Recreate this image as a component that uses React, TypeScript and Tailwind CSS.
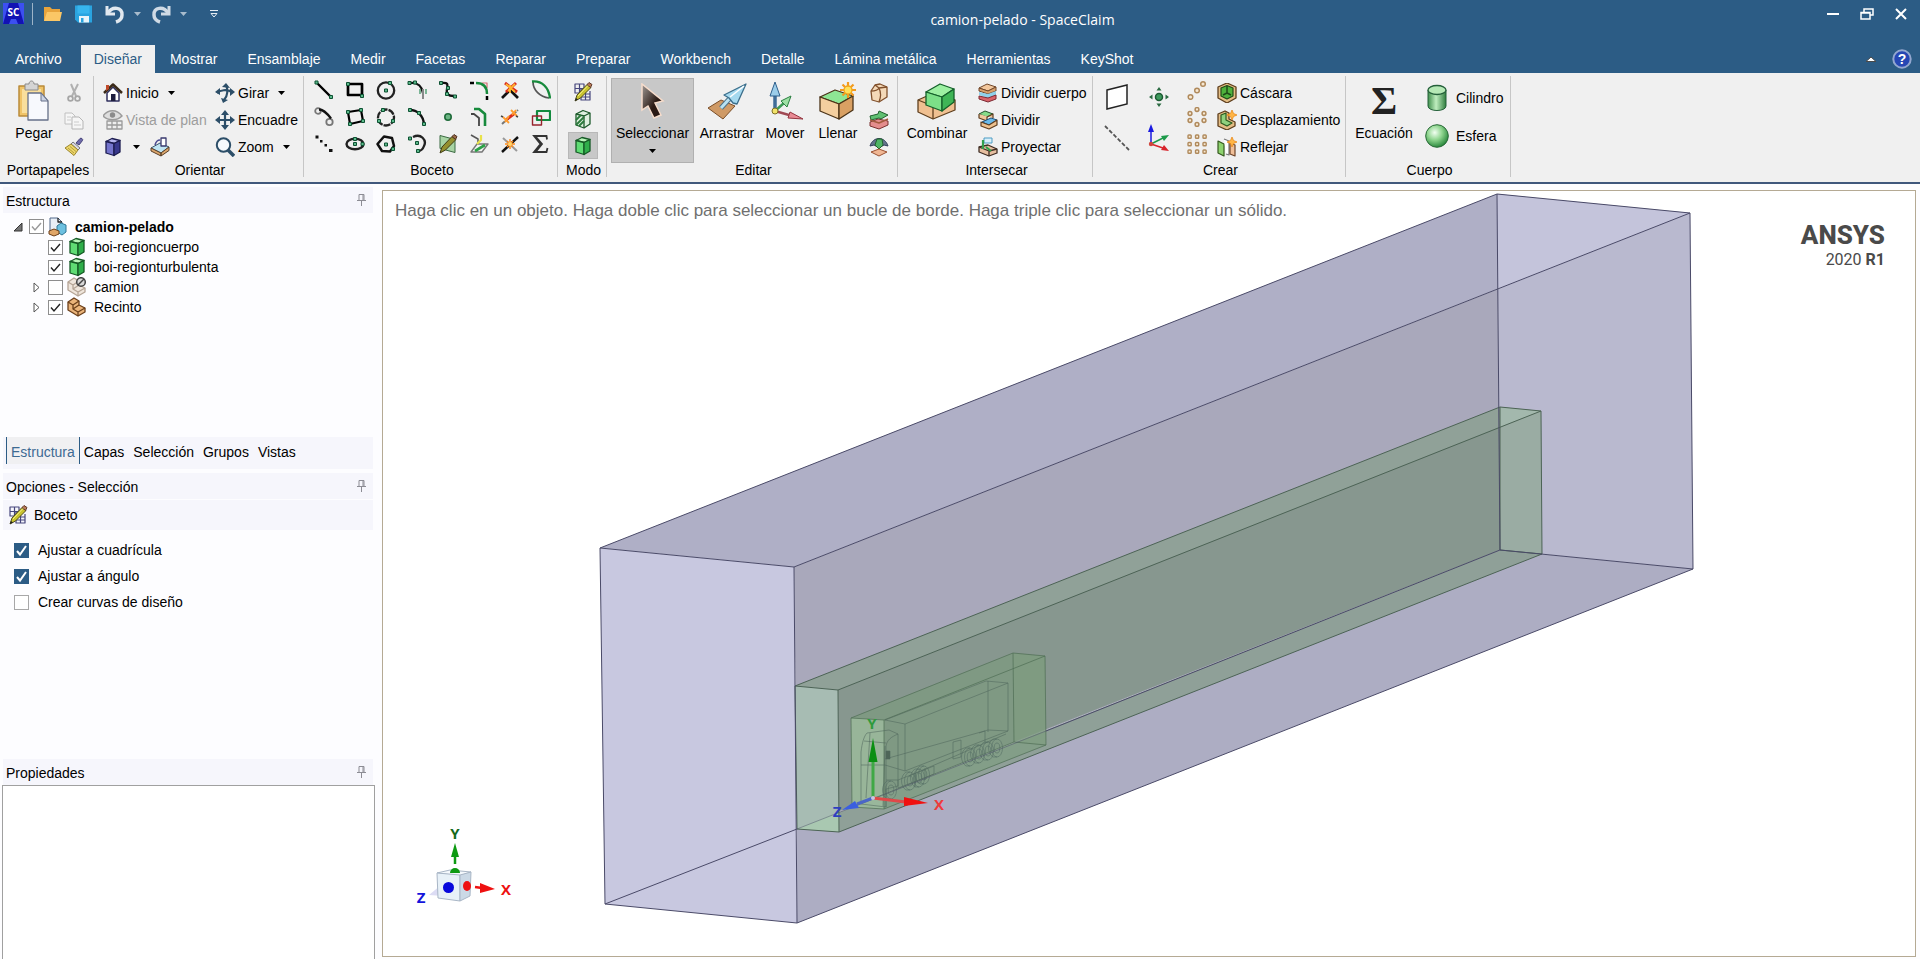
import React from "react";

type Kids = { children?: React.ReactNode };

/* ---------- icon helpers ---------- */

const Ico = ({ size = 20, children }: Kids & { size?: number }) => (
  <svg
    width={size}
    height={size}
    viewBox="0 0 20 20"
    fill="none"
    strokeLinejoin="round"
    className="shrink-0"
    aria-hidden="true"
  >
    {children}
  </svg>
);

const Node = ({ x, y }: { x: number; y: number }) => (
  <rect x={x - 1.5} y={y - 1.5} width="3" height="3" fill="#5cb88a" stroke="#0d5232" />
);

const Caret = ({ light = false }: { light?: boolean }) => (
  <svg width="7" height="4" viewBox="0 0 7 4" aria-hidden="true" className="shrink-0">
    <path d="M0 0h7L3.500 4z" fill={light ? "#a9bccd" : "#000"} />
  </svg>
);

const PencilGrid = () => (
  <Ico>
    <path d="M2 2h9v5H8v4H2zM2 6.500h8M6.500 2v9M12 12h5v6H8v-3h9M12.500 18v-8M17 9v9" stroke="#46467c" strokeWidth="1.200" />
    <path d="M2 19l2-6L14 2.500l4 3L7.500 16z" fill="#c9c32f" stroke="#4d4a18" />
    <path d="M14 2.500l2-2 3 2-1.500 3z" fill="#b87a5a" stroke="#5f3828" />
    <path d="M5 14l10-10.500" stroke="#f4f08a" />
    <path d="M2 19l1-3 2 1.500z" fill="#222" />
  </Ico>
);

const Cube = ({ top, left, right, line }: { top: string; left: string; right: string; line: string }) => (
  <g stroke={line} strokeWidth="1.300">
    <path d="M3 4.500L9 1.500l8 2-6 3z" fill={top} />
    <path d="M3 4.500l8 2V18.500l-8-2.500z" fill={left} />
    <path d="M11 6.500l6-3v11.500l-6 3.500z" fill={right} />
  </g>
);

const GreenCube = () => (
  <Ico>
    <Cube top="#b9f5b9" left="#5fdc73" right="#2fae4a" line="#155a25" />
  </Ico>
);

/* ---------- sketch tools ---------- */

const sketchTools: { name: string; art: React.ReactNode }[] = [
  {
    name: "Línea",
    art: (
      <>
        <path d="M3 3l14 14" stroke="#000" strokeWidth="2.400" />
        <Node x={2.5} y={2.5} />
        <Node x={17} y={17} />
      </>
    ),
  },
  {
    name: "Rectángulo",
    art: (
      <>
        <path d="M3 4h14v11H3z" stroke="#000" strokeWidth="2.700" />
        <Node x={3} y={4} />
        <Node x={17} y={16} />
      </>
    ),
  },
  {
    name: "Círculo",
    art: (
      <>
        <circle cx="10" cy="10.500" r="8.200" stroke="#222" strokeWidth="2.300" />
        <Node x={10} y={10.5} />
        <Node x={14} y={3} />
      </>
    ),
  },
  {
    name: "Arco tangente",
    art: (
      <>
        <path d="M3 3C11 2 15 7 16 13" stroke="#111" strokeWidth="2.300" />
        <path d="M16 9v10" stroke="#888" strokeWidth="2" />
        <path d="M13 9v5M19 9v5" stroke="#2f8f5b" strokeWidth="1.200" />
        <Node x={2.5} y={3} />
        <Node x={8} y={2.5} />
      </>
    ),
  },
  {
    name: "Spline",
    art: (
      <>
        <path d="M3 3c7-1 7 1 6 6s1 7 7 7" stroke="#111" strokeWidth="2.300" />
        <Node x={3} y={3} />
        <Node x={10} y={8} />
        <Node x={17} y={16.5} />
        <Node x={9} y={14} />
      </>
    ),
  },
  {
    name: "Esquina redondeada",
    art: (
      <>
        <path d="M13 3h5v5" stroke="#d96a72" strokeWidth="1.200" />
        <path d="M1 3h4M18 16v4" stroke="#000" strokeWidth="2.500" />
        <path d="M7 3c7 0 11 4 11 11" stroke="#178a3c" strokeWidth="2.400" />
      </>
    ),
  },
  {
    name: "Recortar",
    art: (
      <>
        <path d="M2 18L10 10l8 8" stroke="#111" strokeWidth="2.700" />
        <path d="M5 3l12 9M16 3L6 12" stroke="#d92b1c" strokeWidth="3" />
        <path d="M6 4l9 8M15 4l-7 7M10 5v8" stroke="#ffb52e" strokeWidth="1.800" />
      </>
    ),
  },
  {
    name: "Curva bisectriz",
    art: (
      <>
        <path d="M2 2c0 8 7 15 16 16" stroke="#555" strokeWidth="1.700" />
        <path d="M1 1.500c10-1 17 6 18 17" stroke="#178a3c" strokeWidth="2.400" />
      </>
    ),
  },
  {
    name: "Línea tangente",
    art: (
      <>
        <circle cx="4" cy="4" r="2.800" stroke="#777" strokeWidth="1.800" />
        <circle cx="15.500" cy="15" r="3.200" stroke="#777" strokeWidth="1.800" />
        <path d="M5 2.500c5 0 9 5 12 9" stroke="#111" strokeWidth="2.300" />
      </>
    ),
  },
  {
    name: "Rectángulo de tres puntos",
    art: (
      <>
        <path d="M3 5l13-2 2 11-13 3z" stroke="#000" strokeWidth="2.200" />
        <Node x={3} y={5} />
        <Node x={16} y={3} />
        <Node x={18} y={14} />
        <Node x={5} y={17} />
      </>
    ),
  },
  {
    name: "Círculo de tres puntos",
    art: (
      <>
        <circle cx="10" cy="10.500" r="8" stroke="#222" strokeWidth="2.300" strokeDasharray="7 1" />
        <Node x={7} y={3} />
        <Node x={3} y={14} />
        <Node x={17} y={14} />
      </>
    ),
  },
  {
    name: "Arco de tres puntos",
    art: (
      <>
        <path d="M3 3c7 0 13 5 14 14" stroke="#111" strokeWidth="2.300" />
        <Node x={3} y={3} />
        <Node x={12} y={6} />
        <Node x={17} y={17} />
      </>
    ),
  },
  {
    name: "Punto",
    art: <circle cx="10" cy="10" r="3.200" fill="#6cb583" stroke="#1f6b3a" strokeWidth="1.600" />,
  },
  {
    name: "Curva desplazada",
    art: (
      <>
        <path d="M2 7h3l5 4v8" stroke="#444" strokeWidth="1.800" />
        <path d="M5 2h5l6 5v12" stroke="#178a3c" strokeWidth="2.600" />
      </>
    ),
  },
  {
    name: "Dividir curva",
    art: (
      <>
        <path d="M2 17L18 3" stroke="#777" strokeWidth="2" strokeDasharray="4 1" />
        <path d="M6 13l9-7" stroke="#d92b1c" strokeWidth="3" />
        <path d="M3 10l6 6M5 15l4-6M11 3l6 6M12 8l4-5" stroke="#ff9d2e" strokeWidth="1.800" />
        <path d="M1 9l2 1M16 9l2 1" stroke="#444" strokeWidth="1.600" />
      </>
    ),
  },
  {
    name: "Escalar curva",
    art: (
      <>
        <path d="M6 4h13v9H6z" stroke="#138a3f" strokeWidth="2.200" />
        <path d="M1.500 9h9v9h-9z" stroke="#96232c" strokeWidth="1.400" />
      </>
    ),
  },
  {
    name: "Línea de construcción",
    art: (
      <g fill="#111">
        <rect x="1.500" y="1.500" width="3" height="3" />
        <rect x="6" y="6" width="2.500" height="2.500" />
        <rect x="10.500" y="10" width="2.500" height="2.500" />
        <rect x="15" y="15" width="3.500" height="3" />
      </g>
    ),
  },
  {
    name: "Elipse",
    art: (
      <>
        <ellipse cx="10" cy="10" rx="8.500" ry="5.200" stroke="#222" strokeWidth="2.400" />
        <Node x={10} y={10} />
        <Node x={10} y={5} />
        <Node x={17.5} y={10} />
      </>
    ),
  },
  {
    name: "Polígono",
    art: (
      <>
        <path d="M8 2.500l8 1.500 2 8-4 5.500-8-.5-4.500-7z" stroke="#111" strokeWidth="2.500" />
        <Node x={10} y={10.5} />
        <Node x={17} y={15} />
      </>
    ),
  },
  {
    name: "Arco de barrido",
    art: (
      <>
        <path d="M6 3c8-4 14 3 11 9-1 3-3 5-6 5" stroke="#222" strokeWidth="2.300" />
        <Node x={3} y={4.5} />
        <Node x={10} y={9} />
        <Node x={11} y={17} />
      </>
    ),
  },
  {
    name: "Croquis en plano",
    art: (
      <>
        <path d="M2 1.500l15 4v13l-15-4z" fill="#a8d4a4" stroke="#3b6a42" />
        <path d="M2 19l2-6L14 2.500l4 3L7.500 16z" fill="#94902f" stroke="#3f3c18" />
        <path d="M14 2.500l2-2 3 2-1.500 3z" fill="#9a6a4a" stroke="#4f3020" />
      </>
    ),
  },
  {
    name: "Proyectar a croquis",
    art: (
      <>
        <path d="M2 18l6-8h11l-6 8z" fill="#f4f4f4" stroke="#777" strokeWidth="1.400" />
        <path d="M6 17l10-6" stroke="#2aa046" strokeWidth="2.700" />
        <path d="M2 1l7 4v5" stroke="#555" strokeWidth="1.500" />
        <path d="M12 1v5l-4 4" stroke="#e8e24a" strokeWidth="2.200" />
      </>
    ),
  },
  {
    name: "Unir curvas",
    art: (
      <>
        <path d="M2 18L18 3" stroke="#111" strokeWidth="2.400" />
        <path d="M3 4l14 13" stroke="#999" strokeWidth="2" />
        <path d="M10 5v10M5 10h10M7 7l6 6M13 7l-6 6" stroke="#ff8c1e" strokeWidth="1.500" />
        <circle cx="10" cy="10" r="2" fill="#ffd66b" />
      </>
    ),
  },
  {
    name: "Ecuación de curva",
    art: <path d="M16 5.500L15.500 2H3l6.500 8L3 18h12.500l1-4M5 3l6 7-6 7.500" stroke="#333" strokeWidth="1.800" strokeLinejoin="miter" />,
  },
];

/* ---------- ribbon building blocks ---------- */

const Group = ({ label, className, children }: Kids & { label: string; className: string }) => (
  <section
    aria-label={label}
    className={`flex h-[101px] shrink-0 flex-col border-r border-[#c6c6c6] ${className}`}
  >
    <div className="flex h-[88px]">{children}</div>
    <div className="pl-[3px] text-center leading-[13px] whitespace-nowrap">{label}</div>
  </section>
);

const BigButton = ({
  label,
  active = false,
  className = "",
  children,
}: Kids & { label: string; active?: boolean; className?: string }) => (
  <button
    type="button"
    className={`mt-[2px] flex h-[85px] shrink-0 flex-col items-center border ${
      active ? "border-[#b0b0b0] bg-[#c8c8c8]" : "border-transparent"
    } ${className}`}
  >
    <span className="flex h-11 items-center">{children}</span>
    <span className="leading-5">{label}</span>
    {active && (
      <span className="flex h-4 items-center">
        <Caret />
      </span>
    )}
  </button>
);

const RowButton = ({
  label,
  caret = false,
  disabled = false,
  children,
}: Kids & { label: string; caret?: boolean; disabled?: boolean }) => (
  <button
    type="button"
    disabled={disabled}
    className="flex h-[27px] items-center gap-[3px] whitespace-nowrap disabled:text-[#9d9d9d]"
  >
    {children}
    <span>{label}</span>
    {caret && (
      <span className="ml-[6px]">
        <Caret />
      </span>
    )}
  </button>
);

const IconButton = ({
  label,
  className = "",
  children,
}: Kids & { label: string; className?: string }) => (
  <button
    type="button"
    aria-label={label}
    className={`flex h-[27px] items-center justify-center ${className}`}
  >
    {children}
  </button>
);

/* ---------- title bar and tabs ---------- */

const TitleBar = () => (
  <div className="flex h-[45px] items-start">
    <div className="flex h-[27px] items-center pl-[3px]">
      <svg width="21" height="21" viewBox="0 0 21 21" aria-hidden="true">
        <path d="M0 0h21v21H0z" fill="#3c50f0" />
        <path d="M6 0h9l6 21h-6l-2-5H8l-2 5H0z" fill="#1212b4" />
        <text x="10.500" y="13" textAnchor="middle" fontFamily="Open Sans, sans-serif" fontSize="10" fontWeight="700" fill="#fff">
          SC
        </text>
      </svg>
      <span className="ml-2 h-[22px] w-px bg-[#9db4c8]" />
      <button type="button" aria-label="Abrir" className="ml-[10px]">
        <Ico>
          <path d="M1 3h6l2 2h8v12H1z" fill="#e8a43c" />
          <path d="M1 17L4 8h15l-2 9z" fill="#fbc766" />
        </Ico>
      </button>
      <button type="button" aria-label="Guardar" className="ml-[11px]">
        <Ico>
          <path d="M1 1.500h17v17H4l-3-3z" fill="#2aa4e0" />
          <path d="M3.500 1.500h12v8h-12z" fill="#37b5ee" />
          <path d="M5 12h10v6.500H5z" fill="#e9f4fa" />
          <path d="M7 14h2.500v4.500H7z" fill="#2aa4e0" />
        </Ico>
      </button>
      <button type="button" aria-label="Deshacer" className="ml-[11px]">
        <Ico>
          <path d="M2 2v8h8" stroke="#e1e8ef" strokeWidth="3" strokeLinejoin="miter" />
          <path d="M3 9C7 2 18 3 17 11c0 4-3 6-6 7" stroke="#e1e8ef" strokeWidth="3.500" />
        </Ico>
      </button>
      <span className="ml-[9px]"><Caret light /></span>
      <button type="button" aria-label="Rehacer" className="ml-[10px]">
        <Ico>
          <path d="M18 2v8h-8" stroke="#cfdae5" strokeWidth="3" strokeLinejoin="miter" />
          <path d="M17 9C13 2 2 3 3 11c0 4 3 6 6 7" stroke="#cfdae5" strokeWidth="3.500" />
        </Ico>
      </button>
      <span className="ml-[9px]"><Caret light /></span>
      <button type="button" aria-label="Personalizar" className="ml-[23px]">
        <svg width="8" height="8" viewBox="0 0 8 8" fill="none" stroke="#e6edf3">
          <path d="M0 .5h8M1 3.500h6L4 7z" />
        </svg>
      </button>
    </div>
    <h1 className="flex-1 pt-[9px] text-center font-['Open_Sans',sans-serif] text-[14px] leading-[22px]">
      camion-pelado - SpaceClaim
    </h1>
    <div className="flex h-[28px] items-center gap-[21px] pr-[13px]">
      <button type="button" aria-label="Minimizar">
        <svg width="12" height="14" viewBox="0 0 12 14"><path d="M0 6h12v2H0z" fill="#fff" /></svg>
      </button>
      <button type="button" aria-label="Restaurar">
        <svg width="14" height="12" viewBox="0 0 14 12" fill="none" stroke="#fff" strokeWidth="1.500">
          <path d="M4 4V1h9v6h-3M1 4.500h9v6.500H1zM1 5h9" />
        </svg>
      </button>
      <button type="button" aria-label="Cerrar">
        <svg width="12" height="12" viewBox="0 0 12 12" stroke="#fff" strokeWidth="2">
          <path d="M1 1l10 10M11 1L1 11" />
        </svg>
      </button>
    </div>
  </div>
);

const tabs = [
  "Mostrar",
  "Ensamblaje",
  "Medir",
  "Facetas",
  "Reparar",
  "Preparar",
  "Workbench",
  "Detalle",
  "Lámina metálica",
  "Herramientas",
  "KeyShot",
];

const TabBar = () => (
  <nav className="flex h-7 items-stretch">
    <button type="button" className="mr-1 px-[15px]">Archivo</button>
    <button type="button" className="bg-[#f0f0f0] px-[13px] text-[#2c5c85]">Diseñar</button>
    {tabs.map((tab) => (
      <button key={tab} type="button" className="px-[15px] whitespace-nowrap">{tab}</button>
    ))}
    <div className="ml-auto flex items-center gap-[15px] pr-2">
      <button type="button" aria-label="Contraer cinta">
        <svg width="12" height="6" viewBox="0 0 12 6"><path d="M1 5.500L6 1l5 4.500z" fill="#fff" stroke="#4a4a4a" /></svg>
      </button>
      <button type="button" aria-label="Ayuda">
        <svg width="20" height="20" viewBox="0 0 20 20">
          <circle cx="10" cy="10" r="8.700" fill="#2647b4" stroke="#93a7cf" strokeWidth="2" />
          <text x="10" y="15" textAnchor="middle" fontSize="14" fontWeight="700" fill="#fff">?</text>
        </svg>
      </button>
    </div>
  </nav>
);

/* ---------- ribbon ---------- */

const Ribbon = () => (
  <div className="flex h-[111px] shrink-0 overflow-hidden border-b-2 border-[#40587c] bg-[#f0f0f0] pt-[3px]">
    <Group label="Portapapeles" className="w-[94px]">
      <BigButton label="Pegar" className="ml-2 w-[52px]">
        <svg width="36" height="42" viewBox="0 0 36 42" strokeLinejoin="round">
          <path d="M3 6h25v30H3z" fill="#f0c468" stroke="#b98a3a" strokeWidth="1.500" />
          <path d="M6 9h19v24H6z" fill="#f9df9c" />
          <path d="M9 4h4c0-4 5-4 5 0h4v6H9z" fill="#d4d4d4" stroke="#8a8a8a" />
          <path d="M12 13h13l7 8v19H12z" fill="#f7f9fd" stroke="#667089" strokeWidth="1.300" />
          <path d="M25 13v8h7z" fill="#cbd3e4" stroke="#667089" />
        </svg>
      </BigButton>
      <div className="flex w-[28px] flex-col pt-[3px]">
        <IconButton label="Cortar">
          <Ico>
            <path d="M7 1l5 12M14 1L8 13" stroke="#b0b0b0" strokeWidth="2" />
            <circle cx="6.500" cy="15.500" r="2.400" stroke="#a6a6a6" strokeWidth="1.800" />
            <circle cx="13.500" cy="15.500" r="2.400" stroke="#a6a6a6" strokeWidth="1.800" />
          </Ico>
        </IconButton>
        <IconButton label="Copiar">
          <Ico>
            <path d="M1 3h7l3 3v8H1z" fill="#f6f6f6" stroke="#c0c0c0" />
            <path d="M8 7h7l4 4v8H8z" fill="#f6f6f6" stroke="#b5b5b5" />
            <path d="M10 12h5M10 15h7M3 7h4M3 10h4" stroke="#ccc" />
          </Ico>
        </IconButton>
        <IconButton label="Copiar formato">
          <Ico>
            <path d="M12 6l4-4.500c1-1 3.500.5 2.500 2L15 8z" fill="#6e6aa8" stroke="#45427a" />
            <path d="M9 5l7 6-2 2-7-6z" fill="#d9d9e6" stroke="#777" />
            <path d="M7 7l7 6-4 5.500L1 11z" fill="#ecd66a" stroke="#9a842a" />
            <path d="M4 11l6 5M6 9.500l6 5" stroke="#b79f3c" />
          </Ico>
        </IconButton>
      </div>
    </Group>

    <Group label="Orientar" className="w-[210px]">
      <div className="flex w-[112px] flex-col items-start pt-[3px] pl-[9px]">
        <RowButton label="Inicio" caret>
          <Ico>
            <path d="M4 10v8h12v-8l-6-6z" fill="#fff" stroke="#2f2f5e" strokeWidth="1.500" />
            <path d="M1 10l9-8.500 9 8.500" stroke="#3a2a18" strokeWidth="2.500" />
            <path d="M3 2h3v4L3 8z" fill="#c04a2a" />
            <path d="M8 11h4.500v7H8z" fill="#1d1d3e" />
          </Ico>
        </RowButton>
        <RowButton label="Vista de plan" disabled>
          <Ico>
            <path d="M0 6C5-1 14-1 19 6 14 11 5 11 0 6z" fill="#dedede" stroke="#9b9b9b" strokeWidth="1.500" />
            <circle cx="9.500" cy="5" r="2.700" fill="#8b8b8b" />
            <path d="M4 11h15v8H4zM4 15h15M9 11v8M14 11v8" fill="#eee" stroke="#9b9b9b" strokeWidth="1.300" />
          </Ico>
        </RowButton>
        <div className="flex h-[27px] items-center">
          <IconButton label="Vistas">
            <Ico>
              <Cube top="#b4b4ee" left="#7474cc" right="#38388c" line="#1c1c50" />
            </Ico>
          </IconButton>
          <span className="ml-[10px]"><Caret /></span>
          <IconButton label="Guardar vista" className="ml-[10px]">
            <Ico>
              <path d="M1 11l9-5 9 4-8 6z" fill="#bfe4f2" stroke="#37536b" />
              <path d="M1 11l10 5v3L1 14zM11 16l8-6v3.500l-8 5.500z" fill="#dba66c" stroke="#5b4028" />
              <path d="M11 1h5v8h-5z" fill="#fff" stroke="#39396e" strokeWidth="1.300" />
              <path d="M5 8c1-4 3-5 5-5" stroke="#4b4b90" strokeWidth="1.500" />
            </Ico>
          </IconButton>
        </div>
      </div>
      <div className="flex flex-col items-start pt-[3px] pl-[9px]">
        <RowButton label="Girar" caret>
          <Ico>
            <path d="M2 10c3-3 10-4 15-1M11 2c2 4 2 11-2 15" stroke="#2c4e68" strokeWidth="2.200" />
            <path d="M0 9l5-4v7zM20 9l-5-4v8zM7 4l4-4 4 5zM6 15l2 5 5-3z" fill="#2c4e68" />
          </Ico>
        </RowButton>
        <RowButton label="Encuadre">
          <Ico>
            <path d="M10 2v16M2 10h16" stroke="#2c4e68" strokeWidth="2.200" />
            <path d="M10 0l4 5H6zM10 20l4-5H6zM0 10l5-4v8zM20 10l-5-4v8z" fill="#2c4e68" />
          </Ico>
        </RowButton>
        <RowButton label="Zoom" caret>
          <Ico>
            <circle cx="8.500" cy="8" r="6.700" fill="#f5f9fc" stroke="#2c4e68" strokeWidth="2" />
            <path d="M13 13l6 6" stroke="#2c4e68" strokeWidth="3.500" />
          </Ico>
        </RowButton>
      </div>
    </Group>

    <Group label="Boceto" className="w-[254px]">
      <div className="grid h-[81px] grid-cols-[repeat(8,31px)] pl-1">
        {sketchTools.map((tool) => (
          <IconButton key={tool.name} label={tool.name}>
            <Ico>{tool.art}</Ico>
          </IconButton>
        ))}
      </div>
    </Group>

    <Group label="Modo" className="w-[49px]">
      <div className="flex w-full flex-col items-center pt-[2px] pl-[2px]">
        <IconButton label="Modo boceto" className="w-[30px]">
          <PencilGrid />
        </IconButton>
        <IconButton label="Modo sección" className="w-[30px]">
          <Ico>
            <path d="M3 5l7-3.500 7 2.500v11l-6 4-8-3z" fill="#dff0df" stroke="#1d5a2b" strokeWidth="1.300" />
            <path d="M3 5l8 2v12M11 7l6-3" stroke="#1d5a2b" strokeWidth="1.300" />
            <path d="M3 11l5-5M3 16l8-8M6 17l5-5" stroke="#2b7a3c" strokeWidth="1.800" />
          </Ico>
        </IconButton>
        <IconButton label="Modo 3D" className="w-[30px] border border-[#b8b8b8] bg-[#c8c8c8]">
          <GreenCube />
        </IconButton>
      </div>
    </Group>

    <Group label="Editar" className="w-[291px]">
      <BigButton label="Seleccionar" active className="ml-1 w-[83px]">
        <svg width="26" height="36" viewBox="0 0 26 36">
          <defs>
            <linearGradient id="cursor" x1="0" y1="0" x2="1" y2="1">
              <stop offset="0" stopColor="#a09a96" />
              <stop offset=".6" stopColor="#2b1a14" />
            </linearGradient>
          </defs>
          <path d="M2 1v26l6-4 6 12 7-3-6-12 8-2z" fill="url(#cursor)" stroke="#f6dccb" strokeWidth="1.500" />
        </svg>
      </BigButton>
      <BigButton label="Arrastrar" className="w-[66px]">
        <svg width="42" height="38" viewBox="0 0 42 38" strokeLinejoin="round">
          <path d="M2 26l13-8 14 6-12 13z" fill="#cf9a66" stroke="#7a4e28" />
          <path d="M15 26l11-12" stroke="#4c7288" strokeWidth="5" />
          <path d="M15 26l11-12" stroke="#b8e2f2" strokeWidth="3" />
          <path d="M40 2L18 13l5 3 4 5 4 1z" fill="#a5d9ef" stroke="#3b6d8a" strokeWidth="1.300" />
          <path d="M38 4L24 15" stroke="#fff" strokeWidth="1.500" />
        </svg>
      </BigButton>
      <BigButton label="Mover" className="w-[50px]">
        <svg width="38" height="40" viewBox="0 0 38 40" strokeLinejoin="round">
          <path d="M9 28V12" stroke="#3f6c98" strokeWidth="3.500" />
          <path d="M9 1l5 14H4z" fill="#9ccdea" stroke="#2f5f8c" />
          <path d="M9 30l9-8" stroke="#3d9a55" strokeWidth="2.500" />
          <path d="M25 15l-10 5 6 6z" fill="#9de0a4" stroke="#2a7f40" />
          <path d="M9 30l14 4" stroke="#a04a54" strokeWidth="2.500" />
          <path d="M37 38l-15-1 2-6z" fill="#e88a94" stroke="#94333e" />
          <circle cx="9" cy="30" r="3" fill="#f2e36a" stroke="#7d6f23" />
        </svg>
      </BigButton>
      <BigButton label="Llenar" className="w-[56px]">
        <svg width="38" height="40" viewBox="0 0 38 40" strokeLinejoin="round" stroke="#4b3318" strokeWidth="1.300">
          <path d="M1 16l15-7 18 6-14 8z" fill="#8ee594" />
          <path d="M1 16l19 7v15L1 30z" fill="#f4cf9f" />
          <path d="M20 23l14-8v14L20 38z" fill="#d9a063" />
          <path d="M29 1v16M21 9h16M23.500 3.500l11 11M34.500 3.500l-11 11" stroke="#f39a1e" strokeWidth="2.200" />
          <circle cx="29" cy="9" r="4" fill="#ffe15a" stroke="#f2a51d" />
        </svg>
      </BigButton>
      <div className="flex w-[26px] flex-col pt-[3px]">
        <IconButton label="Combinar caras">
          <Ico>
            <path d="M2 8l4-6 5-1 7 3v10l-8 5-7-2z" fill="#f4d9b8" stroke="#80502c" strokeWidth="1.300" />
            <path d="M2 8c4 0 7-1 8-3l8-1M6 2l4 3c2 4 2 9 0 14" stroke="#80502c" strokeWidth="1.300" />
          </Ico>
        </IconButton>
        <IconButton label="Reemplazar cara">
          <Ico>
            <path d="M1 12l8-3 10 2v4l-9 4-9-3z" fill="#e48d8d" stroke="#7a3030" />
            <path d="M1 6l8-2 1-3 9 4-7 4-2-1-8 2z" fill="#5fc072" stroke="#22612f" />
            <path d="M1 10l9 3 9-4" stroke="#a35b3e" strokeWidth="1.500" />
          </Ico>
        </IconButton>
        <IconButton label="Ajustar cara">
          <Ico>
            <path d="M1 9C4-1 16-1 19 9l-4-1-5 3-5-3z" fill="#64748c" stroke="#33405a" />
            <path d="M8 2h5l1 6-4 4-4-4z" fill="#4fb565" stroke="#22612f" />
            <path d="M2 15l8-3 8 3-8 4z" fill="#f0b794" stroke="#9a5132" />
          </Ico>
        </IconButton>
      </div>
    </Group>

    <Group label="Intersecar" className="w-[195px]">
      <BigButton label="Combinar" className="ml-[6px] w-[66px]">
        <svg width="40" height="38" viewBox="0 0 40 38" strokeLinejoin="round" strokeWidth="1.300">
          <path d="M1 18l9-4 28 4v10L16 37 1 30z" fill="#f0c091" stroke="#60401f" />
          <path d="M1 18l15 6v13M16 24l22-6" stroke="#60401f" fill="none" />
          <path d="M9 10l14-8 14 5-12 8z" fill="#9df0a2" stroke="#14602a" />
          <path d="M9 10l16 5v14L9 23z" fill="#7ce088" stroke="#14602a" />
          <path d="M25 15l12-8v13l-12 9z" fill="#3fb556" stroke="#14602a" />
        </svg>
      </BigButton>
      <div className="flex flex-col items-start pt-[3px] pl-[8px]">
        <RowButton label="Dividir cuerpo">
          <Ico>
            <path d="M1 5l8-4 9 3-8 4z" fill="#f2c79d" stroke="#70472a" />
            <path d="M1 5v3l9 3 8-3V4l-8 4z" fill="#d99f6a" stroke="#70472a" />
            <path d="M1 9v3l9 3 8-3V8l-8 3z" fill="#8fd0ea" />
            <path d="M1 13v3l9 3 8-3v-4l-8 3z" fill="#d9626a" stroke="#7c2a33" />
          </Ico>
        </RowButton>
        <RowButton label="Dividir">
          <Ico>
            <path d="M1 4l6-3 8 3-6 3z" fill="#86dc8a" stroke="#24522d" />
            <path d="M1 4v4l8 3V7l6-3v4" fill="#f0c79b" stroke="#5e3d20" strokeWidth="1.200" />
            <path d="M4 12l9-4 6 2-8 5z" fill="#69b9ea" stroke="#1f527c" />
            <path d="M3 12v4l8 3 8-4v-5l-8 5z" fill="#ecc08e" stroke="#5e3d20" strokeWidth="1.200" />
          </Ico>
        </RowButton>
        <RowButton label="Proyectar">
          <Ico>
            <path d="M1 10l9-2 9 4v4l-8 3-10-4z" fill="#e6bfa0" stroke="#3f2d24" strokeWidth="1.300" />
            <path d="M1 10l10 4 8-2M11 14v5" stroke="#3f2d24" strokeWidth="1.300" />
            <path d="M6 1h8v5H6z" fill="#d9f0fa" stroke="#4c9cc4" />
            <path d="M5 3v9M8 10l5 4" stroke="#32a04c" strokeWidth="2.200" />
          </Ico>
        </RowButton>
      </div>
    </Group>

    <Group label="Crear" className="w-[253px]">
      <div className="grid w-[84px] grid-cols-[42px_42px] grid-rows-[41px_41px] pl-[3px]">
        <button type="button" aria-label="Plano" className="grid place-items-center">
          <svg width="22" height="26" viewBox="0 0 22 26">
            <path d="M1 6l20-5v19L1 25z" fill="#fff" stroke="#222" strokeWidth="1.500" />
          </svg>
        </button>
        <button type="button" aria-label="Origen" className="grid place-items-center">
          <Ico>
            <circle cx="10" cy="10" r="3.500" fill="#3d9a5c" stroke="#1c5a33" strokeWidth="1.500" />
            <path d="M10 0l2.500 3.500h-5zM10 20l2.500-3.500h-5zM0 10l3.500-2.500v5zM20 10l-3.500-2.500v5z" fill="#2b6a42" />
          </Ico>
        </button>
        <button type="button" aria-label="Eje" className="grid place-items-center">
          <svg width="26" height="26" viewBox="0 0 26 26">
            <path d="M1 1l24 24" stroke="#555" strokeWidth="1.800" strokeDasharray="4 2" />
          </svg>
        </button>
        <button type="button" aria-label="Sistema de coordenadas" className="grid place-items-center">
          <svg width="22" height="28" viewBox="0 0 22 28">
            <path d="M3 20V6" stroke="#1a1ae0" strokeWidth="1.500" />
            <path d="M3 0l3 8H0z" fill="#1a1ae0" />
            <path d="M3 20l12-6" stroke="#1c9a4a" strokeWidth="1.500" />
            <path d="M21 11l-8 1 3 5z" fill="#1c9a4a" />
            <path d="M3 20l12 4" stroke="#d8242c" strokeWidth="1.500" />
            <path d="M21 27l-8-1 3-5z" fill="#d8242c" />
            <circle cx="3" cy="20" r="2.200" fill="#d0453c" />
          </svg>
        </button>
      </div>
      <div className="flex w-[40px] flex-col">
        <IconButton label="Patrón lineal">
          <Ico>
            <g stroke="#b08a5c" strokeWidth="1.500" fill="#f6e8d4">
              <circle cx="3.500" cy="17" r="2.300" />
              <circle cx="10" cy="10.500" r="2.300" />
              <circle cx="16" cy="4" r="2.300" />
            </g>
          </Ico>
        </IconButton>
        <IconButton label="Patrón circular">
          <Ico>
            <g stroke="#b08a5c" strokeWidth="1.500" fill="#f6e8d4">
              <circle cx="10" cy="2.500" r="1.900" />
              <circle cx="3" cy="6.500" r="1.900" />
              <circle cx="17" cy="6.500" r="1.900" />
              <circle cx="3" cy="13.500" r="1.900" />
              <circle cx="17" cy="13.500" r="1.900" />
              <circle cx="10" cy="17.500" r="1.900" />
            </g>
          </Ico>
        </IconButton>
        <IconButton label="Patrón de relleno">
          <Ico>
            <g stroke="#b08a5c" strokeWidth="1.400" fill="#f6e8d4">
              {[1, 8.5, 16].map((y) =>
                [1, 8.5, 16].map((x) => <rect key={`${x}-${y}`} x={x} y={y} width="3.200" height="3.200" rx=".8" />)
              )}
            </g>
          </Ico>
        </IconButton>
      </div>
      <div className="flex flex-col items-start pt-[3px]">
        <RowButton label="Cáscara">
          <Ico>
            <path d="M1 4l9-4 9 4v11l-9 5-9-5z" fill="#e3bd85" stroke="#5d3d1c" strokeWidth="1.300" />
            <path d="M4 5l6-2.500L16 5v8l-6 3-6-3z" fill="#4fb13c" stroke="#1f4c18" strokeWidth="1.200" />
            <path d="M10 3v7M6 12l4-2 4 2" stroke="#1f4c18" strokeWidth="1.500" />
          </Ico>
        </RowButton>
        <RowButton label="Desplazamiento">
          <Ico>
            <path d="M1 4l7-3 4 2v6l6 3v4l-8 4-9-4z" fill="#e3bd85" stroke="#5d3d1c" strokeWidth="1.300" />
            <path d="M4 5l5-2v7l6 3-5 3-6-3z" fill="#8fd07e" stroke="#2a5c20" strokeWidth="1.200" />
            <path d="M15 0l1.500 3.500L20 5l-3.500 1.500L15 10l-1.500-3.500L10 5l3.500-1.500z" fill="#ffb545" stroke="#e98a1c" strokeWidth=".8" />
          </Ico>
        </RowButton>
        <RowButton label="Reflejar">
          <Ico>
            <path d="M1 4l6 3v12l-6-3z" fill="#8ed36f" stroke="#35591f" strokeWidth="1.200" />
            <path d="M7 2l5 2v14l-3-1" fill="#fff" stroke="#777" strokeWidth="1.200" />
            <path d="M13 6l5 2v11l-5-2z" fill="#f0bf98" stroke="#6e452a" strokeWidth="1.200" />
            <path d="M15 0l1.500 3.500L20 5l-3.500 1.500L15 10l-1.500-3.500L10 5l3.500-1.500z" fill="#ffb545" stroke="#e98a1c" strokeWidth=".8" />
          </Ico>
        </RowButton>
      </div>
    </Group>

    <Group label="Cuerpo" className="w-[165px]">
      <BigButton label="Ecuación" className="ml-[5px] w-[66px]">
        <span className="font-['Liberation_Serif',serif] text-[40px] leading-[40px] font-bold text-[#222]">Σ</span>
      </BigButton>
      <div className="flex flex-col items-start pt-[3px] pl-[8px]">
        <button type="button" className="flex h-[38px] items-center gap-[7px]">
          <svg width="24" height="28" viewBox="0 0 24 28" aria-hidden="true">
            <defs>
              <linearGradient id="cyl">
                <stop offset="0" stopColor="#3f8f4c" />
                <stop offset=".45" stopColor="#bfeebf" />
                <stop offset="1" stopColor="#2f7d3e" />
              </linearGradient>
            </defs>
            <path d="M3 6v16c0 6 18 6 18 0V6" fill="url(#cyl)" stroke="#24603a" />
            <ellipse cx="12" cy="6" rx="9" ry="4.500" fill="#b5e8b5" stroke="#24603a" strokeWidth="1.300" />
          </svg>
          Cilindro
        </button>
        <button type="button" className="flex h-[38px] items-center gap-[7px]">
          <svg width="24" height="26" viewBox="0 0 24 26" aria-hidden="true">
            <defs>
              <radialGradient id="ball" cx=".4" cy=".35" r=".65">
                <stop offset="0" stopColor="#f2fff2" />
                <stop offset=".5" stopColor="#8fd58f" />
                <stop offset="1" stopColor="#2c8a3e" />
              </radialGradient>
            </defs>
            <circle cx="12" cy="13" r="11.300" fill="url(#ball)" stroke="#2a6a38" />
          </svg>
          Esfera
        </button>
      </div>
    </Group>
  </div>
);

/* ---------- side panels ---------- */

const PanelHeader = ({ title }: { title: string }) => (
  <div className="mr-[9px] ml-[3px] flex h-[26px] shrink-0 items-center justify-between bg-[#f6f6fc] pt-[2px] pr-[7px] pl-[3px]">
    <h2>{title}</h2>
    <button type="button" aria-label={`Fijar ${title}`} className="mb-[3px]">
      <svg width="9" height="12" viewBox="0 0 9 12" fill="none" stroke="#8c8c94">
        <path d="M2 .5h5v6H2zM0 6.500h9M4.500 7v5M6 1v5" />
      </svg>
    </button>
  </div>
);

const TreeCheck = ({ label, checked, dim = false }: { label: string; checked: boolean; dim?: boolean }) => (
  <span className="relative size-[15px] shrink-0">
    <input
      type="checkbox"
      aria-label={label}
      defaultChecked={checked}
      className="peer block size-[15px] appearance-none border border-[#8e8e8e] bg-white"
    />
    <svg
      viewBox="0 0 15 15"
      className={`pointer-events-none absolute inset-0 hidden peer-checked:block ${dim ? "text-[#999]" : "text-[#222]"}`}
    >
      <path d="M3 7.500l3 3.500 6-7" fill="none" stroke="currentColor" strokeWidth="1.400" />
    </svg>
  </span>
);

const Expander = () => (
  <svg width="7" height="11" viewBox="0 0 7 11" aria-hidden="true">
    <path d="M1 1l5 4.500L1 10z" fill="#fff" stroke="#555" />
  </svg>
);

const PartIcon = ({ off = false }: { off?: boolean }) => (
  <Ico>
    <g stroke={off ? "#b5a596" : "#6b3f1a"} strokeWidth="1.300">
      <path d="M1 5l6-4 5 3v4l6 3v4l-7 4-10-6z" fill={off ? "#efe6dc" : "#eab47a"} />
      <path d="M1 5l5 3v4l5 3v4M6 8l6-4M6 12l6-4M11 15l7-4" fill="none" />
    </g>
    {off && (
      <>
        <circle cx="14" cy="5" r="4.300" fill="#d9d9d9" stroke="#444" strokeWidth="1.500" />
        <path d="M11 8l6-6" stroke="#444" strokeWidth="1.500" />
      </>
    )}
  </Ico>
);

const treeItems = [
  { label: "boi-regioncuerpo", checked: true, expander: false, icon: <GreenCube /> },
  { label: "boi-regionturbulenta", checked: true, expander: false, icon: <GreenCube /> },
  { label: "camion", checked: false, expander: true, icon: <PartIcon off /> },
  { label: "Recinto", checked: true, expander: true, icon: <PartIcon /> },
];

const Tree = () => (
  <ul className="h-[224px] shrink-0 pt-[3px]">
    <li className="flex h-[21px] items-center pl-[13px]">
      <svg width="10" height="10" viewBox="0 0 10 10" aria-hidden="true">
        <path d="M9 1v8H1z" fill="#777" stroke="#333" />
      </svg>
      <span className="ml-[6px] flex"><TreeCheck label="camion-pelado" checked dim /></span>
      <span className="ml-1">
        <Ico>
          <path d="M2 1h8l4 4v11H2z" fill="#e9eff6" stroke="#51698a" />
          <path d="M10 1v4h4" stroke="#222" strokeWidth="1.300" />
          <path d="M9 9l4-3 5 2v7l-4 3-5-3z" fill="#6cc0e0" stroke="#2f7796" />
          <path d="M1 14l5-2 5 2v3l-5 2-5-2z" fill="#e0a667" stroke="#6b3f1a" />
        </Ico>
      </span>
      <span className="ml-[7px] font-bold">camion-pelado</span>
    </li>
    {treeItems.map((item) => (
      <li key={item.label} className="flex h-5 items-center pl-[33px]">
        <span className="flex w-[15px]">{item.expander && <Expander />}</span>
        <TreeCheck label={item.label} checked={item.checked} />
        <span className="ml-1">{item.icon}</span>
        <span className="ml-[7px]">{item.label}</span>
      </li>
    ))}
  </ul>
);

const options = [
  { label: "Ajustar a cuadrícula", checked: true },
  { label: "Ajustar a ángulo", checked: true },
  { label: "Crear curvas de diseño", checked: false },
];

const SidePanel = () => (
  <aside className="flex w-[382px] shrink-0 flex-col pt-[3px]">
    <PanelHeader title="Estructura" />
    <Tree />
    <div className="mr-[9px] mb-1 ml-[3px] flex h-8 shrink-0 items-start bg-[#f6f6fc] pl-[3px]">
      <button type="button" className="mr-1 h-[27px] border-x border-[#2c5c85] bg-[#f0f0f2] px-1 pt-[3px] text-[#3d6a92]">
        Estructura
      </button>
      <div className="flex h-[27px] items-center gap-[9px] pt-[3px]">
        {["Capas", "Selección", "Grupos", "Vistas"].map((tab) => (
          <button key={tab} type="button">{tab}</button>
        ))}
      </div>
    </div>
    <PanelHeader title="Opciones - Selección" />
    <div className="mt-px mr-[9px] ml-[3px] flex h-[30px] shrink-0 items-center gap-[6px] bg-[#f6f6fc] pl-[5px]">
      <PencilGrid />
      Boceto
    </div>
    <div className="flex-1 pt-[7px]">
      {options.map((option) => (
        <label key={option.label} className="flex h-[26px] items-center gap-[9px] pl-[14px]">
          <span className="relative size-[15px]">
            <input
              type="checkbox"
              defaultChecked={option.checked}
              className="peer block size-[15px] appearance-none border border-[#a8a8a8] bg-white checked:border-[#2c5c85] checked:bg-[#2c5c85]"
            />
            <svg viewBox="0 0 15 15" className="pointer-events-none absolute inset-0 hidden peer-checked:block">
              <path d="M3 8l3 3.500L12 3" fill="none" stroke="#fff" strokeWidth="2" />
            </svg>
          </span>
          {option.label}
        </label>
      ))}
    </div>
    <PanelHeader title="Propiedades" />
    <div className="mr-[7px] ml-[2px] h-[174px] shrink-0 border border-b-0 border-[#a0a0a0] bg-white" />
  </aside>
);

/* ---------- 3D view ---------- */

const Wheels = ({ x, y, count }: { x: number; y: number; count: number }) => (
  <g fill="none" stroke="#566f64" strokeOpacity=".75" strokeWidth=".8">
    {Array.from({ length: count }, (_, i) => (
      <g key={i}>
        <ellipse cx={x + i * 9} cy={y - i * 3} rx="5.500" ry="9" />
        <ellipse cx={x + i * 9} cy={y - i * 3} rx="2.800" ry="5" />
        <path d={`M${x + i * 9} ${y - i * 3 - 9}h-4c-6 4-6 14 0 18h4`} />
      </g>
    ))}
  </g>
);

const Truck = () => (
  <g fill="none" stroke="#50685e" strokeOpacity=".7" strokeWidth=".8">
    <path d="M885 720L986 681l22 2v48l-103 40M905 724l103-41M885 720l20 4v47M988 681v51M905 771l-20-6M885 759l103-29 20 1M909 776l97-42" />
    <path d="M861 798V752c1-9 3-16 6-19l22-3 9 4v52l-12 3v18l-25-3zM861 765h24M864 741l22 2M886 807V746c1-6 5-9 12-12M885 746l-2 60M870 733l-4 65M886 780h12" />
    <path d="M886 751h4v8h-4z" fill="#4e6658" />
    <path d="M898 780l36-14v8l-36 14zM915 773v14M925 768v12M953 742l8-2v17l-8 2zM979 733l6-2v12" />
    <Wheels x={891} y={790} count={1} />
    <Wheels x={910} y={781} count={2} />
    <Wheels x={924} y={775} count={1} />
    <Wheels x={970} y={757} count={4} />
  </g>
);

const OriginTriad = () => (
  <g fontFamily="Open Sans, sans-serif" fontSize="15" fontWeight="700" textAnchor="middle">
    <path d="M873 798V760" stroke="#3fa845" strokeWidth="3" />
    <path d="M873 738l4.500 24h-9z" fill="#0a8f12" />
    <path d="M873 798l33 4" stroke="#e04848" strokeWidth="3" />
    <path d="M928 803l-24-6v9z" fill="#f01010" />
    <path d="M873 798l-16 6" stroke="#4a66c8" strokeWidth="3" />
    <path d="M842 810l13-9 4 7z" fill="#3a5fe0" />
    <circle cx="873" cy="798" r="2" fill="#c9c9e0" />
    <text x="872" y="729" fill="#2f9a3c">Y</text>
    <text x="939" y="810" fill="#ef3b3b">X</text>
    <text x="837" y="817" fill="#2f3fc0">Z</text>
  </g>
);

const ViewTriad = () => (
  <g fontFamily="Open Sans, sans-serif" fontSize="15" fontWeight="700" textAnchor="middle">
    <path d="M455 864v-10" stroke="#0d9a12" strokeWidth="2.500" />
    <path d="M455 843l4 14h-8z" fill="#0d9a12" />
    <path d="M429 895l12-10 2 11z" fill="#dcdcf4" />
    <path d="M437 873l13-3 21 2-11 4z" fill="#f4f8fc" stroke="#a9b6c6" />
    <path d="M450 873a5 5 0 0 1 10 0z" fill="#0d9a12" />
    <path d="M437 873l23 2v26l-22-3z" fill="#e8f1f8" stroke="#a9b6c6" />
    <path d="M460 875l11-3-1 24-10 5z" fill="#cbd9e6" stroke="#a9b6c6" />
    <circle cx="448.500" cy="887.500" r="5.500" fill="#0808dc" />
    <ellipse cx="467" cy="886" rx="4" ry="5" fill="#ee1111" />
    <path d="M475 887l7 1" stroke="#ee1111" strokeWidth="2.500" />
    <path d="M495 889l-15-6v10z" fill="#ee1111" />
    <text x="455" y="839" fill="#146a1c">Y</text>
    <text x="506" y="895" fill="#ee1111">X</text>
    <text x="421" y="903" fill="#1414dc">Z</text>
  </g>
);

const Scene = () => (
  <svg
    viewBox="383 191 1532 765"
    preserveAspectRatio="xMidYMid slice"
    className="absolute inset-0 size-full"
    role="img"
    aria-label="Recinto con camión"
  >
    {/* enclosure */}
    <path d="M600 548L1497 194l193 19L794 567z" fill="#afafc6" />
    <path d="M1497 194l193 19-192 76z" fill="#c4c4db" />
    <path d="M1498 289l192-76 3 356-193-19z" fill="#b9b9cf" />
    <path d="M794 567l704-278 2 261-703 279z" fill="#a9a8bb" />
    <path d="M797 829l703-279 193 19L797 923z" fill="#adadc3" />
    <path d="M600 548l194 19 3 356-192-19z" fill="#c8c8e0" />

    {/* turbulence region */}
    <path d="M795 686L1500 407l41 4L838 690z" fill="#90a198" />
    <path d="M838 690l662-263v123L839 811z" fill="#87978f" />
    <path d="M1500 427l41-16 1 143-42-4z" fill="#9aaca3" />
    <path d="M1500 407l41 4-41 16z" fill="#a3b8ad" />
    <path d="M797 829l703-279 42 4L839 832z" fill="#8fa098" />
    <path d="M795 686l43 4 1 142-42-3z" fill="#a7bcb3" />
    <path d="M797 829l42-17v20z" fill="#a9c8b1" />

    {/* body region */}
    <path d="M851 718l162-65 32 3 1 89-162 64-32-2z" fill="#789c78" fillOpacity=".5" />
    <path d="M851 718l33 2v89l-32-2z" fill="#a9c8a8" fillOpacity=".6" />
    <path d="M1013 653l32 3 1 89-32-3z" fill="#7f9d80" fillOpacity=".4" />
    <path
      d="M851 718l162-65 32 3 1 89-162 64-32-2zM851 718l33 2v89M884 720l161-64M1013 653l1 89 32 3M852 807l162-65"
      fill="none"
      stroke="#4f6e55"
      strokeOpacity=".8"
      strokeWidth=".9"
    />
    <Truck />

    <g fill="none" stroke="#4c6355" strokeWidth="1">
      <path d="M795 686L1500 407l41 4 1 143L839 832l-42-3z" />
      <path d="M795 686l43 4L1541 411M838 690l1 142M1500 407v143l42 4" />
    </g>
    <g fill="none" stroke="#4a4a68" strokeWidth="1">
      <path d="M600 548L1497 194l193 19 3 356L797 923l-192-19z" />
      <path d="M600 548l194 19L1690 213M794 567l3 356M1497 194l3 356 193 19" />
      <path d="M605 904l192-75M1046 731l454-181" />
      <path d="M797 829l249-98" strokeOpacity=".45" />
    </g>

    <OriginTriad />
    <ViewTriad />
  </svg>
);

const Viewport = () => (
  <main className="relative mt-[6px] mr-1 mb-[2px] flex-1 overflow-hidden border border-[#b5aa94] bg-white">
    <Scene />
    <div className="relative flex items-start justify-between pr-[30px] pl-3">
      <p className="pt-[9px] text-[17px] leading-[22px] text-[#6f6f6f]">
        Haga clic en un objeto. Haga doble clic para seleccionar un bucle de borde. Haga triple clic para seleccionar un
        sólido.
      </p>
      <div className="pt-[29px] text-right font-[Roboto,sans-serif] text-[#4a4a4a]">
        <div className="text-[26px] leading-[30px] font-extrabold">ANSYS</div>
        <div className="text-[16px] leading-5">
          2020 <b>R1</b>
        </div>
      </div>
    </div>
  </main>
);

export default function App() {
  return (
    <div className="flex h-screen flex-col overflow-hidden bg-[#fdfdff] font-['Liberation_Sans',Arial,sans-serif] text-[14px] leading-5 text-black">
      <header className="shrink-0 bg-[#2c5c85] text-white">
        <TitleBar />
        <TabBar />
      </header>
      <Ribbon />
      <div className="flex min-h-0 flex-1">
        <SidePanel />
        <Viewport />
      </div>
    </div>
  );
}
